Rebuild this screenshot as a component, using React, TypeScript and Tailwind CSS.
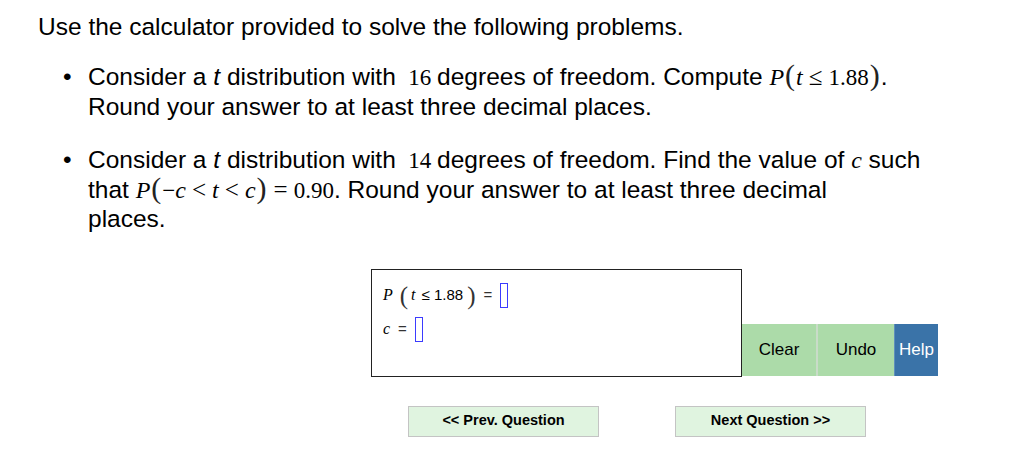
import React from "react";

const serif = "font-['Liberation_Serif','DejaVu_Serif',serif]";

function M({ children }: { children: React.ReactNode }) {
  return <span className={`${serif} text-[23px] leading-[10px]`}>{children}</span>;
}

function I({ children }: { children: React.ReactNode }) {
  return <span className={`${serif} italic text-[24px] leading-[10px]`}>{children}</span>;
}

function Rel({ children }: { children: React.ReactNode }) {
  return <span className={`${serif} text-[25px] leading-[10px] mx-[6px]`}>{children}</span>;
}

function Paren({ children }: { children: React.ReactNode }) {
  return <span className={`${serif} text-[30px] leading-[10px] font-light text-[#222] mx-[1px]`}>{children}</span>;
}

function Bullet({ children }: { children: React.ReactNode }) {
  return (
    <li className="flex">
      <span className="w-[50px] shrink-0 pl-[25px]">•</span>
      <span className="block w-[880px]">{children}</span>
    </li>
  );
}

function Slot() {
  return <span className="inline-block w-[8px] h-[25px] border border-[#3b3bff] align-middle" />;
}

export default function App() {
  return (
    <main className="min-h-screen bg-white text-black font-['Liberation_Sans',Arial,sans-serif] pl-[38px] pt-[13px]">
      <p className="text-[24.5px] leading-[28px]">
        Use the calculator provided to solve the following problems.
      </p>

      <ul className="mt-[21px] text-[24.5px] leading-[29.5px] flex flex-col gap-[24px]">
        <Bullet>
          Consider a <i>t</i> distribution with <M>&nbsp;16&nbsp;</M>degrees of freedom. Compute{" "}
          <I>P</I>
          <Paren>(</Paren>
          <I>t</I>
          <Rel>≤</Rel>
          <M>1.88</M>
          <Paren>)</Paren>.
          <br />
          Round your answer to at least three decimal places.
        </Bullet>
        <Bullet>
          Consider a <i>t</i> distribution with <M>&nbsp;14&nbsp;</M>degrees of freedom. Find the value of <I>c</I> such
          <br />
          that <I>P</I>
          <Paren>(</Paren>
          <M>−</M>
          <I>c</I>
          <Rel>&lt;</Rel>
          <I>t</I>
          <Rel>&lt;</Rel>
          <I>c</I>
          <Paren>)</Paren>
          <Rel>=</Rel>
          <M>0.90</M>. Round your answer to at least three decimal
          <br />
          places.
        </Bullet>
      </ul>

      <div className="flex items-end ml-[333px] mt-[35px]">
        <div className="w-[371px] h-[108px] border border-[#222] pl-[11px] pt-[12px] flex flex-col gap-[7px]">
          <div className="flex items-center gap-[3px] h-[27px]">
            <span className={`${serif} italic text-[16px]`}>P</span>
            <span className={`${serif} text-[25px] leading-none text-[#333] ml-[4px]`}>(</span>
            <span className={`${serif} italic text-[16px]`}>t</span>
            <span className="text-[15px] ml-[3px]">≤ 1.88</span>
            <span className={`${serif} text-[25px] leading-none text-[#333] ml-[1px]`}>)</span>
            <span className="text-[15px] text-[#333] mx-[5px]">=</span>
            <Slot />
          </div>
          <div className="flex items-center gap-[8px] h-[27px]">
            <span className={`${serif} italic text-[16px]`}>c</span>
            <span className="text-[15px] text-[#333]">=</span>
            <Slot />
          </div>
        </div>
        <div className="flex h-[52px] mb-[1px] text-[17px]">
          <button className="w-[76px] h-full bg-[#acdba9] border-r-2 border-[#c9dcc8] text-black">
            Clear
          </button>
          <button className="w-[76px] h-full bg-[#acdba9] text-black">Undo</button>
          <button className="w-[44px] h-full bg-[#3a73a8] border-l border-[#5f8fbb] text-white">
            Help
          </button>
        </div>
      </div>

      <div className="flex gap-[76px] ml-[370px] mt-[29px]">
        <button className="w-[191px] h-[31px] bg-[#e0f4e0] border border-[#c4c4c4] text-[14.5px] font-bold">
          &lt;&lt; Prev. Question
        </button>
        <button className="w-[191px] h-[31px] bg-[#e0f4e0] border border-[#c4c4c4] text-[14.5px] font-bold">
          Next Question &gt;&gt;
        </button>
      </div>
    </main>
  );
}
